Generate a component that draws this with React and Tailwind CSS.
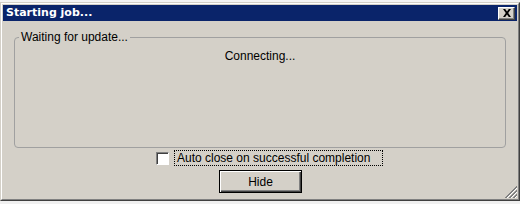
import React from 'react'

const font = { fontFamily: '"Liberation Sans", Arial, sans-serif' }

function CloseButton() {
  return (
    <div className="flex h-[13px] w-[17px] items-center justify-center border border-t-white border-l-white border-r-[#404040] border-b-[#404040] bg-[#d4d0c8] shadow-[inset_-1px_-1px_0_#808080]">
      <svg width="10" height="8" viewBox="0 0 10 8">
        <path d="M1 0h2.2l1.8 2.4L6.8 0H9L6.2 4 9 8H6.8L5 5.6 3.2 8H1l2.8-4z" fill="#000" />
      </svg>
    </div>
  )
}

function Grip() {
  return (
    <svg width="12" height="12" viewBox="0 0 12 12" className="block">
      {[0, 4, 8].map((o) => (
        <g key={o}>
          <line x1={12} y1={o} x2={o} y2={12} stroke="#808080" strokeWidth="1" />
          <line x1={12} y1={o + 1} x2={o + 1} y2={12} stroke="#808080" strokeWidth="1" />
          <line x1={12} y1={o + 2} x2={o + 2} y2={12} stroke="#ffffff" strokeWidth="1" />
        </g>
      ))}
    </svg>
  )
}

export default function App() {
  return (
    <div className="h-[204px] w-[520px] overflow-hidden bg-white" style={font}>
      <div className="h-[2px] bg-[#f4f4f4]" />
      <div className="h-[199px] border border-[#d4d0c8] border-r-[#404040] border-b-[#404040]">
        <div className="flex h-full flex-col border border-white border-r-[#808080] border-b-[#808080] bg-[#d4d0c8] p-[1px]">
          <div className="flex h-[16px] shrink-0 items-center justify-between bg-[#0a246a] pl-[3px] pr-[2px]">
            <span
              className="text-[11px] font-bold text-white"
              style={{ fontFamily: '"DejaVu Sans", Verdana, sans-serif' }}
            >
              Starting job...
            </span>
            <CloseButton />
          </div>

          <div className="relative flex flex-1 flex-col px-[11px] pt-[9px]">
            <fieldset className="h-[118px] rounded-[4px] border border-[#a0a0a0] px-[4px]">
              <legend className="px-[2px] text-[12px] leading-[14px] text-black">Waiting for update...</legend>
              <p className="mt-[3px] text-center text-[12px] text-black">Connecting...</p>
            </fieldset>

            <div className="mt-[2px] flex items-center gap-[5px] pl-[142px]">
              <div className="h-[13px] w-[13px] border border-t-[#808080] border-l-[#808080] border-r-white border-b-white bg-white shadow-[inset_1px_1px_0_#404040]" />
              <span className="border border-dotted border-black pl-[2px] pr-[12px] text-[12px] leading-[14px] text-black">
                Auto close on successful completion
              </span>
            </div>

            <div className="mt-[4px] flex justify-center pl-[1px]">
              <button className="h-[23px] w-[83px] border border-black bg-[#d4d0c8] text-[12px] text-black shadow-[inset_1px_1px_0_#ffffff,inset_-1px_-1px_0_#404040,inset_-2px_-2px_0_#808080]">
                Hide
              </button>
            </div>

            <div className="absolute bottom-[0px] right-[0px]">
              <Grip />
            </div>
          </div>
        </div>
      </div>
      <div className="h-[3px] bg-[#f0f0f0]" />
    </div>
  )
}
